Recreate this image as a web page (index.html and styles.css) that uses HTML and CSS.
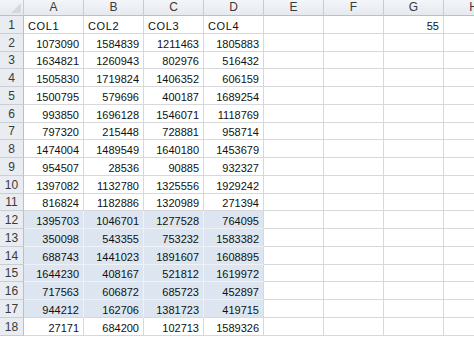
FILE: index.html
```html
<!DOCTYPE html>
<html>
<head>
    <title>Sheet1</title>
    <link rel="stylesheet" href="styles.css">
</head>
<body>
    <table class="sheet">
        <colgroup>
            <col class="col-head">
            <col class="col"><col class="col"><col class="col"><col class="col">
            <col class="col"><col class="col"><col class="col"><col class="col">
        </colgroup>
        <thead>
            <tr>
                <th class="corner"><span class="triangle"></span></th>
                <th>A</th><th>B</th><th>C</th><th>D</th><th>E</th><th>F</th><th>G</th><th>H</th>
            </tr>
        </thead>
        <tbody>
            <tr><th>1</th><td class="text">COL1</td><td class="text">COL2</td><td class="text">COL3</td><td class="text">COL4</td><td></td><td></td><td>55</td><td></td></tr>
            <tr><th>2</th><td>1073090</td><td>1584839</td><td>1211463</td><td>1805883</td><td></td><td></td><td></td><td></td></tr>
            <tr><th>3</th><td>1634821</td><td>1260943</td><td>802976</td><td>516432</td><td></td><td></td><td></td><td></td></tr>
            <tr><th>4</th><td>1505830</td><td>1719824</td><td>1406352</td><td>606159</td><td></td><td></td><td></td><td></td></tr>
            <tr><th>5</th><td>1500795</td><td>579696</td><td>400187</td><td>1689254</td><td></td><td></td><td></td><td></td></tr>
            <tr><th>6</th><td>993850</td><td>1696128</td><td>1546071</td><td>1118769</td><td></td><td></td><td></td><td></td></tr>
            <tr><th>7</th><td>797320</td><td>215448</td><td>728881</td><td>958714</td><td></td><td></td><td></td><td></td></tr>
            <tr><th>8</th><td>1474004</td><td>1489549</td><td>1640180</td><td>1453679</td><td></td><td></td><td></td><td></td></tr>
            <tr><th>9</th><td>954507</td><td>28536</td><td>90885</td><td>932327</td><td></td><td></td><td></td><td></td></tr>
            <tr><th>10</th><td>1397082</td><td>1132780</td><td>1325556</td><td>1929242</td><td></td><td></td><td></td><td></td></tr>
            <tr><th>11</th><td>816824</td><td>1182886</td><td>1320989</td><td>271394</td><td></td><td></td><td></td><td></td></tr>
            <tr class="sel"><th>12</th><td>1395703</td><td>1046701</td><td>1277528</td><td>764095</td><td></td><td></td><td></td><td></td></tr>
            <tr class="sel"><th>13</th><td>350098</td><td>543355</td><td>753232</td><td>1583382</td><td></td><td></td><td></td><td></td></tr>
            <tr class="sel"><th>14</th><td>688743</td><td>1441023</td><td>1891607</td><td>1608895</td><td></td><td></td><td></td><td></td></tr>
            <tr class="sel"><th>15</th><td>1644230</td><td>408167</td><td>521812</td><td>1619972</td><td></td><td></td><td></td><td></td></tr>
            <tr class="sel"><th>16</th><td>717563</td><td>606872</td><td>685723</td><td>452897</td><td></td><td></td><td></td><td></td></tr>
            <tr class="sel"><th>17</th><td>944212</td><td>162706</td><td>1381723</td><td>419715</td><td></td><td></td><td></td><td></td></tr>
            <tr><th>18</th><td>27171</td><td>684200</td><td>102713</td><td>1589326</td><td></td><td></td><td></td><td></td></tr>
        </tbody>
    </table>
</body>
</html>
```

FILE: styles.css
```css
body {
    margin: 0;
    background: #fff;
    overflow: hidden;
    font-family: "Liberation Sans", Arial, sans-serif;
    font-size: 11px;
    color: #111;
}

.sheet {
    table-layout: fixed;
    border-collapse: separate;
    border-spacing: 0;
    width: 504px;
}

.col-head {
    width: 24px;
}

.col {
    width: 60px;
}

.sheet th,
.sheet td {
    box-sizing: border-box;
    border-right: 1px solid #d6d8db;
    border-bottom: 1px solid #d6d8db;
    padding: 0;
    white-space: nowrap;
    overflow: hidden;
}

.sheet td {
    height: 17.75px;
    line-height: 13px;
    text-align: right;
    vertical-align: bottom;
    padding-right: 4px;
}

.sheet td.text {
    text-align: left;
    padding-left: 4px;
    padding-right: 0;
    letter-spacing: 0.6px;
}

/* column and row headers */
.sheet thead th {
    height: 16px;
    font-weight: normal;
    color: #3a3a3a;
    text-align: center;
    vertical-align: middle;
    line-height: 15px;
    font-size: 12px;
    background: linear-gradient(#f3f5f8, #e6e9ee);
    border-right-color: #c7ccd3;
    border-bottom-color: #b9c0c9;
}

.sheet tbody th {
    font-weight: normal;
    color: #3a3a3a;
    font-size: 12px;
    text-align: center;
    vertical-align: bottom;
    line-height: 15px;
    background: #e9ecf0;
    border-right-color: #b9c0c9;
    border-bottom-color: #c9ced5;
}

.corner {
    position: relative;
}

.triangle {
    position: absolute;
    right: 2px;
    bottom: 2px;
    width: 0;
    height: 0;
    border-left: 10px solid transparent;
    border-bottom: 10px solid #d5d9df;
}

/* selected range A12:D17 */
.sel td:nth-child(-n+5) {
    background: #dde6f0;
    border-bottom-color: #eef2f7;
    border-right-color: #eef2f7;
}

.sel td:nth-child(5) {
    border-right-color: #d6d8db;
}

.sel:nth-child(17) td:nth-child(-n+5) {
    border-bottom-color: #d6d8db;
}
```
